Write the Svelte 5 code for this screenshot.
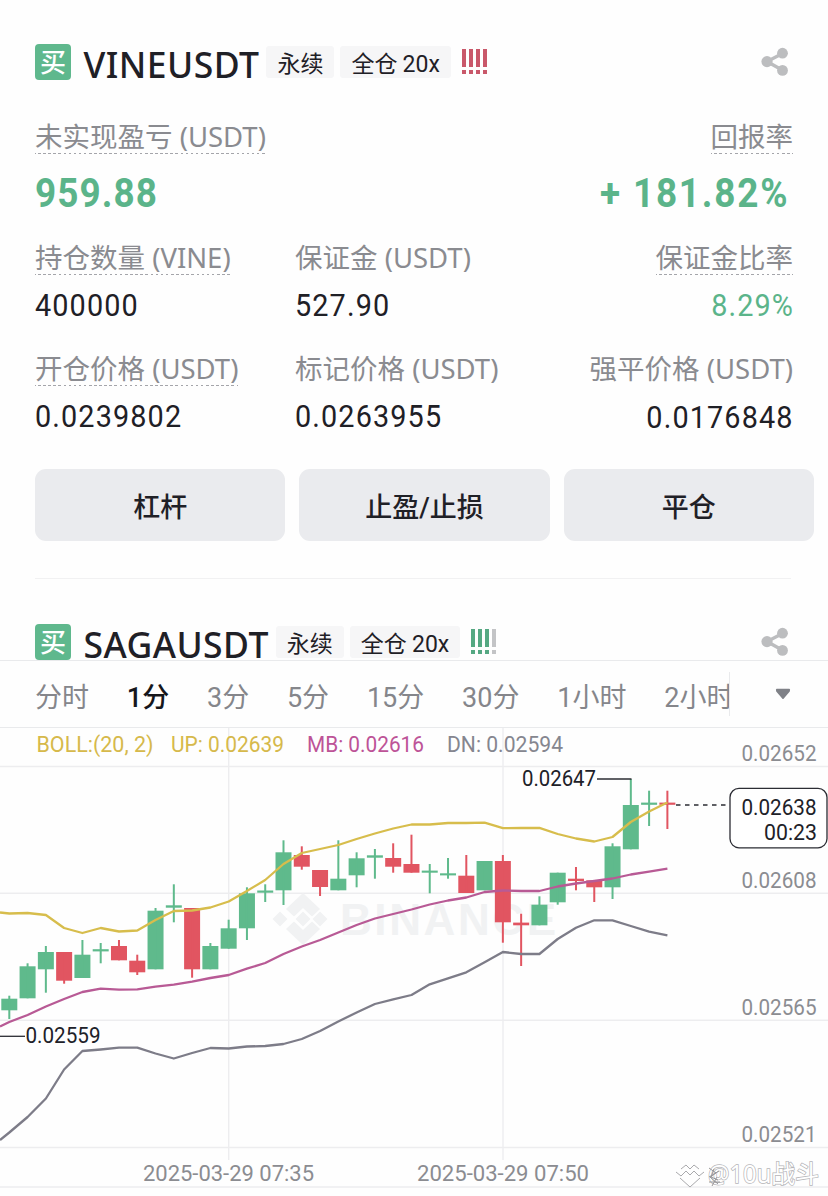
<script>
    const positions = [
        { symbol: 'VINEUSDT', bars: ['red', 'red', 'red', 'red'] },
        { symbol: 'SAGAUSDT', bars: ['green', 'green', 'green', 'gray'] }
    ];

    const stats = [
        { label: '持仓数量 (VINE)', value: '400000', dotted: true },
        { label: '保证金 (USDT)', value: '527.90' },
        { label: '保证金比率', value: '8.29%', dotted: true, green: true },
        { label: '开仓价格 (USDT)', value: '0.0239802', dotted: true },
        { label: '标记价格 (USDT)', value: '0.0263955' },
        { label: '强平价格 (USDT)', value: '0.0176848' }
    ];

    const actions = ['杠杆', '止盈/止损', '平仓'];
    const intervals = ['分时', '1分', '3分', '5分', '15分', '30分', '1小时', '2小时'];
    let active = '1分';

    const legend = [
        { text: 'BOLL:(20, 2)', x: 36.5, width: 117, color: '#d6b94b' },
        { text: 'UP: 0.02639', x: 171, width: 113, color: '#d6b94b' },
        { text: 'MB: 0.02616', x: 307, width: 117, color: '#bd5397' },
        { text: 'DN: 0.02594', x: 447, width: 116, color: '#85868f' }
    ];

    const priceLabels = [
        { text: '0.02652', y: 760.5 },
        { text: '0.02608', y: 887.5 },
        { text: '0.02565', y: 1014.5 },
        { text: '0.02521', y: 1141.5 }
    ];

    // body top, body bottom, wick top, wick bottom, rising
    const candles = [
        [998.7, 1010.3, 995.7, 1019, 1],
        [966.3, 998.3, 963.3, 998.3, 1],
        [952, 969.3, 946, 992.7, 1],
        [952, 980.7, 952, 983.7, 0],
        [954.7, 978, 940, 978, 1],
        [949.2, 951.4, 943, 963.3, 1],
        [946, 960.3, 940, 960.3, 0],
        [960.7, 972.3, 954.7, 975, 0],
        [910.7, 969.3, 908, 969.3, 1],
        [905.3, 907.7, 884.3, 922.3, 1],
        [908, 969.3, 908, 977.7, 0],
        [946, 969.3, 943, 969.3, 1],
        [928.3, 948.7, 919.7, 948.7, 1],
        [893.3, 928.3, 887.3, 940, 1],
        [890.5, 892.7, 884.3, 902, 1],
        [852.3, 890.3, 840.3, 905, 1],
        [855, 866.7, 846.3, 869.7, 0],
        [870, 887, 870, 896, 0],
        [878.7, 890.3, 840.3, 890.3, 1],
        [858.3, 875.3, 852.3, 887.3, 1],
        [855.3, 857.7, 849, 878.7, 1],
        [858, 866.7, 843.3, 872.7, 0],
        [864, 872.7, 834.7, 872.7, 0],
        [870.6, 872.7, 864, 893.3, 1],
        [873.3, 875.4, 858, 878.7, 1],
        [875.7, 893, 855, 893, 0],
        [861, 890.3, 861, 890.3, 1],
        [861, 922.3, 855, 942.7, 0],
        [922.6, 925.3, 913.7, 966, 0],
        [904.7, 925.3, 896.3, 925.3, 1],
        [872.7, 902.3, 872.7, 904.7, 1],
        [878.7, 881, 867, 890.3, 0],
        [880.3, 887.3, 880.3, 902, 0],
        [846.3, 887.3, 843.3, 899, 1],
        [805, 849.3, 779, 849.3, 1],
        [802.6, 804.8, 790.7, 826, 1],
        [802.6, 804.8, 790.7, 829, 0]
    ];

    const up = [913.5, 913, 915, 928, 933, 928, 931.5, 930.5, 920, 911, 910.5, 907.5, 901.5, 891, 880, 864, 853, 849, 845, 839, 833.5, 828.5, 824.5, 824.5, 823, 823, 822.7, 828.2, 828, 827.8, 834, 838.5, 841.5, 837, 822, 811.5, 802.5];
    const mb = [1022, 1015, 1006.5, 999, 992, 988.7, 989.7, 989.3, 986.7, 984.7, 981.7, 978, 975, 968.7, 963, 954, 946.5, 940, 932.5, 925, 918.5, 914, 909.5, 904.5, 900.5, 897.5, 892, 890.5, 891, 891, 886.5, 883.5, 881, 878.5, 874.5, 871.7, 868.7];
    const dn = [1132.5, 1117, 1098.5, 1069.5, 1051, 1049.5, 1047.7, 1047.7, 1053.5, 1058.5, 1053, 1048, 1048.5, 1046.5, 1046, 1044, 1039, 1031, 1021.5, 1012.5, 1004, 999.3, 995, 984.3, 978.3, 972.3, 962.3, 952, 954, 954, 939, 927.7, 920.3, 920.3, 926, 931.7, 935.3];

    const cx = (i) => 9.3 + i * 18.28;
    const line = (start, ys) => `0,${start} ` + ys.map((y, i) => `${cx(i).toFixed(1)},${y}`).join(' ');
</script>

{#snippet header(pos)}
    <div class="header">
        <span class="side">买</span>
        <span class="symbol">{pos.symbol}</span>
        <span class="tag">永续</span>
        <span class="tag wide">全仓 <span class="lev">20x</span></span>
        <span class="bars">
            {#each pos.bars as color}
                <i class={color}></i>
            {/each}
        </span>
        <svg class="share" width="28" height="30" viewBox="0 0 28 30">
            <path d="M22 6.2L6 14.5L22 23.5" fill="none" stroke="#bcbdbf" stroke-width="3.4" />
            <circle cx="6" cy="14.6" r="5.6" fill="#bcbdbf" />
            <circle cx="21.5" cy="6.2" r="5.4" fill="#bcbdbf" />
            <circle cx="21.5" cy="23.4" r="5.4" fill="#bcbdbf" />
        </svg>
    </div>
{/snippet}

<div class="page">
    <section class="position">
        {@render header(positions[0])}
        <div class="pnl">
            <div class="cell">
                <span class="label dotted">未实现盈亏 (USDT)</span>
                <span class="big">959.88</span>
            </div>
            <div class="cell end">
                <span class="label dotted">回报率</span>
                <span class="big roi">+ 181.82%</span>
            </div>
        </div>
        <div class="stats">
            {#each stats as stat}
                <div class="cell">
                    <span class="label" class:dotted={stat.dotted}>{stat.label}</span>
                    <span class="value" class:green={stat.green}>{stat.value}</span>
                </div>
            {/each}
        </div>
        <div class="actions">
            {#each actions as action}
                <button>{action}</button>
            {/each}
        </div>
    </section>

    <section class="position second">
        {@render header(positions[1])}
    </section>

    <nav class="intervals">
        <div class="scroll">
            {#each intervals as item}
                <button class:active={item === active} on:click={() => (active = item)}>{item}</button>
            {/each}
        </div>
        <svg class="arrow" width="16" height="12" viewBox="0 0 16 12">
            <path d="M1.6 0.8H14.4Q15.6 1 14.8 3.4L8.8 10.4Q8 11.4 7.2 10.4L1.2 3.4Q0.4 1 1.6 0.8Z" fill="#7f8187" />
        </svg>
    </nav>

    <svg class="chart" width="828" height="468" viewBox="0 728 828 468">
        <g stroke="#ededef" stroke-width="1.4">
            {#each [766.5, 893.3, 1020.3, 1147.5, 1187] as y}
                <line x1="0" x2="828" y1={y} y2={y} />
            {/each}
            <line x1="228.7" x2="228.7" y1="728" y2="1160" />
            <line x1="503" x2="503" y1="728" y2="1160" />
        </g>

        <g fill="#f1f2f3">
            <path d="M303 893L320 909L312 916.5L303 908L294 916.5L286 909Z" />
            <path d="M303 945L286 929L294 921.5L303 930L312 921.5L320 929Z" />
            <path d="M303 911.5L310.500 919L303 926.500L295.500 919Z" />
            <path d="M280 911.500L287.500 919L280 926.500L272.500 919Z" />
            <path d="M320 911.500L327.500 919L320 926.500L312.500 919Z" />
            <text class="brand" x="340" y="935" textLength="216">BINANCE</text>
        </g>

        {#each candles as [top, bottom, high, low, rising], i}
            <g fill={rising ? '#5fba8c' : '#e15561'}>
                <rect x={cx(i) - 8} y={top} width="16" height={bottom - top} />
                <rect x={cx(i) - 1} y={high} width="2" height={low - high} />
            </g>
        {/each}

        <g fill="none" stroke-width="2.3" stroke-linejoin="round">
            <polyline points={line(912.5, up)} stroke="#d7bd4c" />
            <polyline points={line(1026.5, mb)} stroke="#b85a95" />
            <polyline points={line(1140, dn)} stroke="#7d7c88" />
        </g>

        {#each legend as item}
            <text x={item.x} y="752" textLength={item.width} lengthAdjust="spacingAndGlyphs" fill={item.color}>{item.text}</text>
        {/each}

        {#each priceLabels as label}
            <text x="741.5" y={label.y} textLength="75" lengthAdjust="spacingAndGlyphs" fill="#8b8c91">{label.text}</text>
        {/each}

        <text x="143" y="1180.500" textLength="171" lengthAdjust="spacingAndGlyphs" fill="#8b8c91">2025-03-29 07:35</text>
        <text x="417" y="1180.500" textLength="172" lengthAdjust="spacingAndGlyphs" fill="#8b8c91">2025-03-29 07:50</text>

        <g stroke="#2b2c33" stroke-width="1.3" fill="none">
            <path d="M597 779H631.500" />
            <path d="M0 1036.300H25" />
            <path d="M676 805H728" stroke-dasharray="4.500 4.500" />
            <rect x="730" y="788.300" width="97" height="59.500" rx="9" fill="#fff" />
        </g>
        <g fill="#202128">
            <text x="522" y="786" textLength="74" lengthAdjust="spacingAndGlyphs">0.02647</text>
            <text x="25.500" y="1043" textLength="75" lengthAdjust="spacingAndGlyphs">0.02559</text>
            <text x="741.500" y="814.500" textLength="75" lengthAdjust="spacingAndGlyphs">0.02638</text>
            <text x="764" y="839.500" textLength="53" lengthAdjust="spacingAndGlyphs">00:23</text>
        </g>

        <g fill="none" stroke="#a9a9ac" stroke-width="1">
            <path d="M681 1169L686 1165L690 1169L694 1165L699 1169" />
            <path d="M676 1172L681 1176L686 1171L690 1175L694 1171L699 1176L704 1172" />
            <path d="M680 1178L690 1187L700 1178" />
        </g>
        <text class="author" x="708" y="1183" textLength="111" lengthAdjust="spacingAndGlyphs">@10u战斗</text>
        <path d="M709 1168l7 5l-6 4l8 7M709 1177l10 -6M712 1186l5 -9M709 1182h11M714 1169l-3 8l7 3" fill="none" stroke="#97979a" stroke-width="1" />
    </svg>
</div>

<style>
:global(body) {
    background: #fefefe;
}

.page {
    width: 828px;
    height: 1196px;
    overflow: hidden;
    font-family: "Noto Sans", "Noto Sans CJK SC", sans-serif;
    color: #1f2026;
}

.position {
    height: 578px;
    box-sizing: border-box;
    padding: 43px 35px 0;
}

.position.second {
    height: 83px;
    padding-top: 45px;
    position: relative;
    border-bottom: 1.5px solid #e9eaec;
}

/* inset rule between the two positions */
.position.second::before {
    content: "";
    position: absolute;
    top: 0;
    left: 35px;
    right: 37px;
    height: 1px;
    background: #f1f1f2;
}

.header {
    display: flex;
    align-items: center;
    height: 37px;
}

.side {
    width: 36px;
    height: 36px;
    border-radius: 4px;
    background: #5fb88d;
    color: #fff;
    font-size: 26px;
    font-weight: 500;
    line-height: 33px;
    text-align: center;
    font-family: "Noto Sans CJK SC", sans-serif;
}

.symbol {
    margin-left: 12.5px;
    font-size: 35.5px;
    font-weight: 500;
    letter-spacing: 0.45px;
    line-height: 37px;
    padding-top: 5px;
}

.tag {
    height: 32px;
    margin-left: 7px;
    padding: 0 11px;
    border-radius: 3px;
    background: #f6f6f7;
    font-size: 23px;
    line-height: 32px;
    font-family: "Noto Sans CJK SC", sans-serif;
}

.tag.wide {
    margin-left: 6px;
}

.lev {
    font-family: Roboto, sans-serif;
}

.bars {
    display: flex;
    gap: 3px;
    margin-left: 11px;
}

.bars i {
    width: 4px;
    height: 25px;
    background: linear-gradient(currentColor 0 18px, transparent 18px 21px, currentColor 21px);
}

.bars .red {
    color: #c9586a;
}

.bars .green {
    color: #55a882;
}

.bars .gray {
    color: #c3c4c6;
}

.share {
    margin-left: auto;
    margin-right: 4px;
}

.pnl {
    display: flex;
    justify-content: space-between;
    padding-top: 38px;
}

.cell {
    display: flex;
    flex-direction: column;
    align-items: flex-start;
}

.cell.end, .stats .cell:nth-child(3n) {
    align-items: flex-end;
}

.label {
    height: 35px;
    line-height: 37px;
    border-bottom: 2px dotted transparent;
    color: #8a8b90;
    font-size: 27.5px;
    white-space: nowrap;
}

.label.dotted {
    border-image: repeating-linear-gradient(90deg, #a4a5aa 0 2.5px, transparent 2.5px 5px) 2;
    border-width: 0 0 1.5px;
}

/* figures are set narrower than Roboto's own width */
.big, .value {
    font-family: Roboto, sans-serif;
    transform: scaleX(0.9);
    transform-origin: left;
}

.big {
    margin-top: 15px;
    color: #5bb48a;
    font-size: 41px;
    font-weight: 700;
    letter-spacing: 1.2px;
    line-height: 48px;
}

.big.roi {
    margin-right: 4px;
    letter-spacing: 2px;
    transform-origin: right;
}

.stats {
    display: grid;
    grid-template-columns: 260px 238px 260px;
    row-gap: 26px;
    padding-top: 22px;
}

.value {
    margin-top: 11px;
    font-size: 32px;
    line-height: 38px;
    letter-spacing: 1.25px;
}

.stats .cell:nth-child(3n + 2) .value {
    margin-top: 10px;
}

.stats .cell:nth-child(3n) .value {
    margin-right: -1px;
    transform-origin: right;
}

.green {
    color: #5bb48a;
}

.actions {
    display: flex;
    gap: 14px;
    width: 779px;
    margin-top: 33px;
}

.actions button {
    flex: 1;
    height: 72px;
    padding: 0;
    border: none;
    border-radius: 11px;
    background: #eaebee;
    color: #1f2026;
    font-family: Roboto, "Noto Sans CJK SC", sans-serif;
    font-size: 27px;
    font-weight: 500;
}

.intervals {
    display: flex;
    align-items: center;
    height: 67px;
    box-sizing: border-box;
    border-bottom: 1.5px solid #e9eaec;
}

.scroll {
    display: flex;
    align-items: center;
    gap: 37.8px;
    width: 694px;
    height: 44px;
    padding-left: 35px;
    overflow: hidden;
    border-right: 1px solid #e9eaec;
}

.scroll button {
    flex: none;
    padding: 8px 0 0;
    border: none;
    background: none;
    color: #85868b;
    font-family: Roboto, "Noto Sans CJK SC", sans-serif;
    font-size: 27px;
    line-height: 40px;
}

.scroll button.active {
    color: #16171c;
    font-weight: 500;
}

.arrow {
    margin: 0 0 0 45px;
}

.chart {
    display: block;
    font-family: Roboto, sans-serif;
    font-size: 22px;
}

.brand {
    font-family: "Liberation Sans", sans-serif;
    font-size: 44px;
    font-weight: 700;
}

.author {
    font-family: "Noto Sans", "Noto Sans CJK SC", sans-serif;
    font-size: 25px;
    fill: #fff;
    stroke: #b5b5b8;
    stroke-width: 1.5px;
    paint-order: stroke;
}
</style>
